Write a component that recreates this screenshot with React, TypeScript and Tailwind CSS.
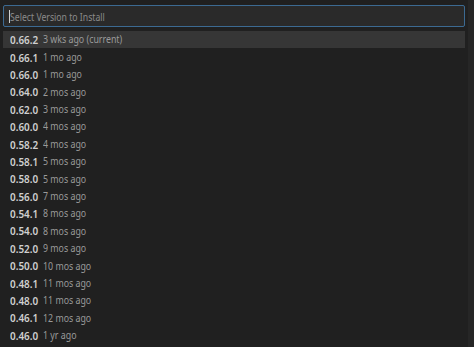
import React from "react";

const rows: [string, string][] = [
  ["0.66.2", "3 wks ago (current)"],
  ["0.66.1", "1 mo ago"],
  ["0.66.0", "1 mo ago"],
  ["0.64.0", "2 mos ago"],
  ["0.62.0", "3 mos ago"],
  ["0.60.0", "4 mos ago"],
  ["0.58.2", "4 mos ago"],
  ["0.58.1", "5 mos ago"],
  ["0.58.0", "5 mos ago"],
  ["0.56.0", "7 mos ago"],
  ["0.54.1", "8 mos ago"],
  ["0.54.0", "8 mos ago"],
  ["0.52.0", "9 mos ago"],
  ["0.50.0", "10 mos ago"],
  ["0.48.1", "11 mos ago"],
  ["0.48.0", "11 mos ago"],
  ["0.46.1", "12 mos ago"],
  ["0.46.0", "1 yr ago"],
];

export default function App() {
  return (
    <div
      className="w-[474px] h-[347px] overflow-hidden bg-[#202020] flex"
      style={{ fontFamily: '"Noto Sans", "Open Sans", sans-serif' }}
    >
      <div className="flex-1 flex flex-col pt-[5px] pl-[3px] pr-[3px]">
        <div className="h-[22px] border border-[#3c6a92] bg-[#2a2a2a] rounded-[2px] flex items-center pl-[5px]">
          <span className="w-px h-[13px] bg-[#d0d0d0]" />
          <span className="inline-block origin-left scale-x-[0.79] text-[11px] text-[#8a8a8a] leading-none whitespace-nowrap">
            Select Version to Install
          </span>
        </div>
        <div className="mt-[4px] flex flex-col">
          {rows.map(([v, d], i) => (
            <div
              key={v}
              className={`h-[17.4px] flex items-center pl-[7px] ${i === 0 ? "bg-[#363636]" : ""}`}
            >
              <div className="w-[33px] shrink-0 flex items-center">
                <span className="block origin-left scale-x-[0.9] text-[11px] font-semibold text-[#d0d0d0] leading-none whitespace-nowrap">
                  {v}
                </span>
              </div>
              <span className="block origin-left scale-x-[0.84] text-[10.5px] text-[#9a9a9a] leading-none whitespace-nowrap">
                {d}
              </span>
            </div>
          ))}
        </div>
      </div>
      <div className="w-[6px] bg-[#262626]" />
    </div>
  );
}
